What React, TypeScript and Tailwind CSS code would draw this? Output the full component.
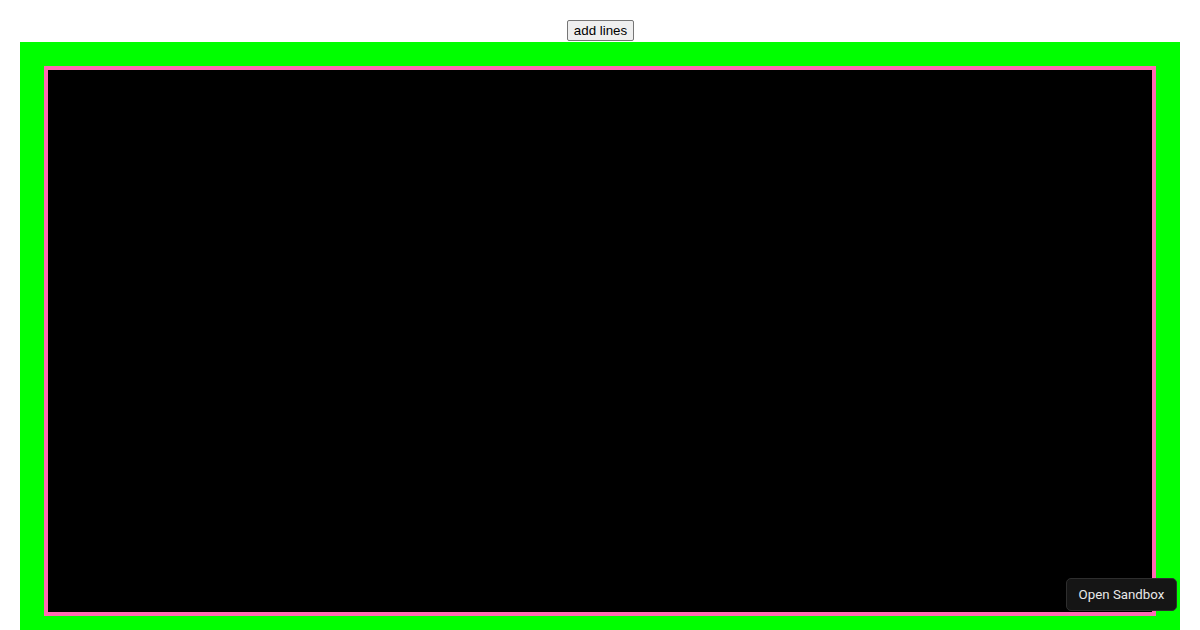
export default function App() {
  return (
    <div className="relative w-[1200px] h-[630px] overflow-hidden bg-white">
      <div className="flex justify-center pt-[20px] h-[42px]">
        <button className="h-[21px] w-[67px] ml-[1px] bg-[#efefef] border border-[#767676] rounded-[2px] text-[13.33px] leading-[19px] text-black font-['Liberation_Sans',Arial,sans-serif]">
          add lines
        </button>
      </div>
      <div className="mx-[20px] p-[24px] bg-[#00ff00]">
        <div className="border-4 border-[#ff69b4] bg-black h-[550px]"></div>
      </div>
      <button className="absolute left-[1066px] top-[578px] w-[111px] h-[33px] rounded-[5px] bg-[#151515] border border-[#2e2e2e] text-[#e8e8e8] text-[13.3px] font-['Roboto',sans-serif] flex items-center justify-center">
        Open Sandbox
      </button>
    </div>
  );
}
